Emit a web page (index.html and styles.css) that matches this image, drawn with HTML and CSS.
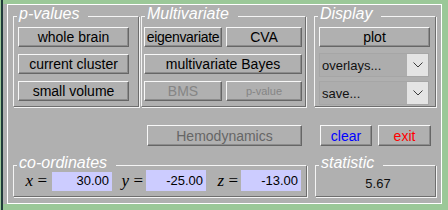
FILE: index.html
```html
<!DOCTYPE html>
<html lang="en">
<head>
  <meta charset="UTF-8" />
  <title>SPM Results</title>
  <link rel="stylesheet" href="styles.css">
</head>
<body>
  <div class="edge"></div>
  <div class="strip"></div>
  <div class="panel">
    <div class="top-row">
      <!-- p-values -->
      <div class="frame pvalues">
        <span class="title">p-values</span>
        <button class="btn wide">whole brain</button>
        <button class="btn wide">current cluster</button>
        <button class="btn wide">small volume</button>
      </div>

      <!-- Multivariate -->
      <div class="frame multi">
        <span class="title">Multivariate</span>
        <div class="multi-grid">
          <button class="btn tight">eigenvariate</button>
          <button class="btn">CVA</button>
          <button class="btn span2">multivariate Bayes</button>
          <button class="btn off">BMS</button>
          <button class="btn off small">p-value</button>
        </div>
      </div>

      <!-- Display -->
      <div class="frame display">
        <span class="title">Display</span>
        <button class="btn plot">plot</button>
        <div class="popup first">
          <span class="popup-text">overlays...</span>
          <span class="arrow"><svg width="10" height="6" viewBox="0 0 10 6"><polyline points="0.5,0.5 5,5 9.5,0.5" fill="none" stroke="#3c3c3c" stroke-width="1"/></svg></span>
        </div>
        <div class="popup">
          <span class="popup-text">save...</span>
          <span class="arrow"><svg width="10" height="6" viewBox="0 0 10 6"><polyline points="0.5,0.5 5,5 9.5,0.5" fill="none" stroke="#3c3c3c" stroke-width="1"/></svg></span>
        </div>
      </div>
    </div>

    <div class="mid-row">
      <button class="btn hemo">Hemodynamics</button>
      <button class="btn clear">clear</button>
      <button class="btn exit">exit</button>
    </div>

    <div class="bottom-row">
      <div class="frame coords">
        <span class="title">co-ordinates</span>
        <span class="lbl l1"><i>x</i> =</span>
        <span class="field">30.00</span>
        <span class="lbl l2"><i>y</i> =</span>
        <span class="field">-25.00</span>
        <span class="lbl l3"><i>z</i> =</span>
        <span class="field">-13.00</span>
      </div>
      <div class="frame stat">
        <span class="title">statistic</span>
        <span class="stat-value">5.67</span>
      </div>
    </div>
  </div>
</body>
</html>
```

FILE: styles.css
```css
body {
  margin: 0;
  width: 448px;
  height: 210px;
  background: #9bc898;
  font-family: 'Liberation Sans', Arial, sans-serif;
  display: flex;
  align-items: flex-start;
  overflow: hidden;
}
.edge {
  margin-left: 1px;
  width: 2px;
  height: 210px;
  background: #1f3a3a;
}
.strip {
  margin-top: 4px;
  width: 4px;
  height: 200px;
  background: #b0b0b0;
}
.panel {
  margin-top: 4px;
  width: 435px;
  height: 200px;
  box-sizing: border-box;
  border: 1px solid #ffffff;
  background: #b0b0b0;
  padding: 11px 0 0 5px;
}

/* frames */
.frame {
  position: relative;
  box-sizing: border-box;
  border: 1px solid;
  border-color: #f4f4f4 #6e6e6e #6e6e6e #f4f4f4;
  box-shadow: 1px 1px 0 #f4f4f4;
}
.title {
  position: absolute;
  top: -12px;
  left: 3px;
  padding: 0 9px 0 2px;
  background: #b0b0b0;
  color: #ffffff;
  font-style: italic;
  font-size: 16px;
  line-height: 18px;
  white-space: nowrap;
}
.top-row {
  display: flex;
  height: 91px;
}
.pvalues {
  width: 126px;
  padding: 10px 0 0 4px;
  display: flex;
  flex-direction: column;
  gap: 7px;
}
.multi {
  width: 165px;
  margin-left: 2px;
  padding: 10px 0 0 2px;
}
.display {
  width: 122px;
  margin-left: 8px;
  padding: 10px 0 0 4px;
}
.multi-grid {
  display: grid;
  grid-template-columns: 78px 76px;
  grid-auto-rows: 20px;
  column-gap: 4px;
  row-gap: 7px;
}
.span2 {
  grid-column: span 2;
}

/* buttons */
.btn {
  box-sizing: border-box;
  height: 20px;
  margin: 0;
  padding: 0;
  font-family: 'Liberation Sans', Arial, sans-serif;
  font-size: 14px;
  color: #000000;
  background: #b0b0b0;
  border: 1px solid;
  border-color: #f8f8f8 #666666 #666666 #f8f8f8;
  box-shadow: inset -1px -1px 0 #8c8c8c;
  white-space: nowrap;
  overflow: hidden;
}
.tight {
  letter-spacing: -0.3px;
}
.wide {
  width: 111px;
}
.off {
  color: #858585;
}
.small {
  font-size: 11px;
}
.plot {
  width: 111px;
  display: block;
}
.popup {
  width: 110px;
  height: 24px;
  box-sizing: border-box;
  display: flex;
  align-items: center;
  background: #adadad;
  border: 1px solid #a6a6a6;
  margin-top: 4px;
}
.popup.first {
  margin-top: 6px;
}
.popup-text {
  flex: 1;
  padding-left: 2px;
  font-size: 13px;
  color: #111111;
}
.arrow {
  width: 21px;
  height: 22px;
  background: #e4e4e4;
  display: flex;
  align-items: center;
  justify-content: center;
}

/* middle row */
.mid-row {
  display: flex;
  margin-top: 18px;
  margin-left: 134px;
  height: 21px;
}
.mid-row .btn {
  height: 21px;
}
.hemo {
  width: 155px;
  color: #666666;
}
.clear {
  width: 52px;
  margin-left: 18px;
  color: #0000ff;
}
.exit {
  width: 53px;
  margin-left: 6px;
  color: #ff0000;
}

/* bottom row */
.bottom-row {
  display: flex;
  margin-top: 19px;
  height: 32px;
}
.coords {
  width: 294px;
  padding-top: 4px;
  display: flex;
  align-items: flex-start;
}
.lbl {
  box-sizing: border-box;
  height: 21px;
  line-height: 21px;
  text-align: right;
  font-family: 'Liberation Serif', 'Times New Roman', serif;
  font-size: 17px;
  color: #000000;
  white-space: nowrap;
}
.l1 {
  width: 38px;
  padding-right: 5px;
}
.l2 {
  width: 34px;
  padding-right: 3px;
}
.l3 {
  width: 35px;
  padding-right: 3px;
}
.field {
  box-sizing: border-box;
  width: 60px;
  height: 21px;
  line-height: 21px;
  background: #ccccff;
  text-align: right;
  padding-right: 3px;
  font-size: 13px;
  color: #000000;
}
.stat {
  width: 121px;
  margin-left: 8px;
  padding: 8px 0 0 5px;
  text-align: center;
}
.stat-value {
  font-size: 13px;
  line-height: 15px;
  color: #111111;
}
```
